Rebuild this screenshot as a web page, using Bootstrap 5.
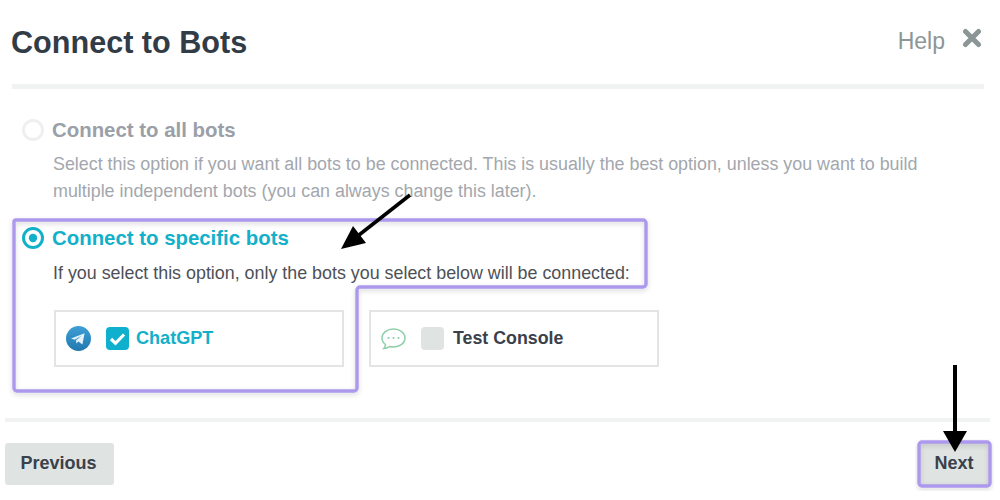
<!DOCTYPE html>
<html lang="en">
<head>
<meta charset="utf-8">
<title>Connect to Bots</title>
<link href="https://cdn.jsdelivr.net/npm/bootstrap@5.3.0/dist/css/bootstrap.min.css" rel="stylesheet">
<style>
html,body{height:500px;overflow:hidden}
body{font-family:"Liberation Sans",Arial,sans-serif;background:#fff;color:#3f4650}
.stage{position:relative;width:1000px;height:500px;display:flex;flex-direction:column;padding-top:20px}
.top-bar{padding:0 18px 0 11px;height:44px}
.page-title{font-size:30.6px;font-weight:700;color:#323c47;margin:0;line-height:44px}
.help-link{font-size:23px;color:#8c9696;line-height:40px;margin-right:17px;margin-top:-2px}
.close-x{display:block;margin-top:-8px}
.rule-top{height:5px;background:#f1f2f2;margin:20px 16px 0 12px;flex:none}
.options{padding:0 0 0 22px;height:329px}
.opt-head{display:flex;align-items:center;gap:8px;font-size:20.4px;font-weight:700;line-height:24px}
.opt-one{margin-top:29px}
.opt-one .opt-head{color:#9a9fa8}
.opt-two{margin-top:21px}
.opt-two .opt-head{color:#12b0c9}
.opt-text{font-size:17.88px;line-height:27px;margin:9px 50px 0 31px;color:#a3a7ad}
.opt-two .opt-text{color:#4d5157;margin-top:10px;margin-bottom:0;white-space:nowrap}
.bot-row{display:flex;gap:25px;margin:23px 0 0 32px}
.bot-box{width:290px;height:57px;border:2px solid #e3e5e5;display:flex;align-items:center;padding-left:10px;font-size:17.8px;font-weight:700;color:#3a414b}
.bot-box.on{color:#12b0c9;font-size:18.1px}
.tick{width:23px;height:23px;border-radius:4px;background:#dfe3e2;margin-left:15px;margin-right:9px;flex:none;display:flex;align-items:center;justify-content:center}
.tick.on{background:#0fb0cd;margin-right:7px}
.rule-low{height:4px;background:#f1f2f2;margin:0 10px 0 5px;flex:none}
.foot{padding:21px 10px 0 5px}
.btn-flat{background:#dfe3e2;color:#3a414b;border:0;border-radius:3px;font-size:18px;font-weight:700;height:42px;display:flex;align-items:center;justify-content:center;padding:0 2px 2px 0}
.btn-prev{width:109px}
.btn-next{width:70px}
.overlay{position:absolute;left:0;top:0;pointer-events:none}
</style>
</head>
<body>
<div class="stage">
  <div class="top-bar d-flex justify-content-between align-items-center">
    <h1 class="page-title">Connect to Bots</h1>
    <div class="d-flex align-items-center">
      <span class="help-link">Help</span>
      <svg class="close-x" width="20" height="20" viewBox="0 0 20 20" aria-hidden="true"><path d="M3.5 3.5 16.500 16.500M16.500 3.500 3.500 16.500" stroke="#8c9696" stroke-width="5" stroke-linecap="round"/></svg>
    </div>
  </div>
  <div class="rule-top"></div>
  <div class="options">
    <div class="opt-one">
      <div class="opt-head">
        <svg width="22" height="22" viewBox="0 0 22 22" aria-hidden="true"><circle cx="11" cy="11" r="9.500" fill="#fff" stroke="#eef0f0" stroke-width="3"/></svg>
        <span>Connect to all bots</span>
      </div>
      <p class="opt-text">Select this option if you want all bots to be connected. This is usually the best option, unless you want to build multiple independent bots (you can always change this later).</p>
    </div>
    <div class="opt-two">
      <div class="opt-head">
        <svg width="22" height="22" viewBox="0 0 22 22" aria-hidden="true"><circle cx="11" cy="11" r="9.500" fill="#fff" stroke="#12b0c9" stroke-width="3"/><circle cx="11" cy="11" r="4.200" fill="#12b0c9"/></svg>
        <span>Connect to specific bots</span>
      </div>
      <p class="opt-text">If you select this option, only the bots you select below will be connected:</p>
      <div class="bot-row">
        <div class="bot-box on">
          <svg width="25" height="25" viewBox="0 0 25 25" aria-hidden="true"><defs><linearGradient id="tg" x1="0" y1="0" x2="0" y2="1"><stop offset="0" stop-color="#3d9fd6"/><stop offset="1" stop-color="#2279ae"/></linearGradient></defs><circle cx="12.500" cy="12.500" r="12.500" fill="url(#tg)"/><path d="M5 12.600 18.600 7.200 16.400 18.400 12.400 15.600 10.400 17.600 10 14.200 15.600 9.800 8.600 13.800Z" fill="#e4f1f9"/></svg>
          <span class="tick on"><svg width="17" height="14" viewBox="0 0 17 14" aria-hidden="true"><path d="M2 7 6.500 11.300 15 2.500" fill="none" stroke="#fff" stroke-width="3.200"/></svg></span>
          <span>ChatGPT</span>
        </div>
        <div class="bot-box">
          <svg width="25" height="24" viewBox="0 0 25 24" aria-hidden="true"><path d="M12.500 2C6 2 1 6 1 11c0 2.600 1.300 4.900 3.500 6.500 0 1.600-.7 3-1.700 4 2.300 0 4.300-.8 5.700-2 1.200.3 2.700.5 4 .5 6.500 0 11.500-4 11.500-9S19 2 12.500 2Z" fill="none" stroke="#8fd0ab" stroke-width="1.500"/><circle cx="7.500" cy="11" r="1.100" fill="#8fd0ab"/><circle cx="12.500" cy="11" r="1.100" fill="#8fd0ab"/><circle cx="17.500" cy="11" r="1.100" fill="#8fd0ab"/></svg>
          <span class="tick"></span>
          <span>Test Console</span>
        </div>
      </div>
    </div>
  </div>
  <div class="rule-low"></div>
  <div class="foot d-flex justify-content-between align-items-center">
    <button type="button" class="btn btn-flat btn-prev">Previous</button>
    <button type="button" class="btn btn-flat btn-next">Next</button>
  </div>
  <svg class="overlay" width="1000" height="500" viewBox="0 0 1000 500" aria-hidden="true">
    <defs><filter id="sh" x="-5%" y="-5%" width="110%" height="115%"><feDropShadow dx="0" dy="2" stdDeviation="2.500" flood-color="#000" flood-opacity=".16"/></filter></defs>
    <path d="M16 220H643a3 3 0 0 1 3 3V284a3 3 0 0 1-3 3H360a3 3 0 0 0-3 3V388a3 3 0 0 1-3 3H17a3 3 0 0 1-3-3V222a2 2 0 0 1 2-2Z" fill="none" stroke="#ac98ec" stroke-width="3.400" filter="url(#sh)"/>
    <rect x="919" y="442" width="71" height="44" rx="3" fill="none" stroke="#ac98ec" stroke-width="3.400" filter="url(#sh)"/>
    <path d="M410 195 359 235" stroke="#000" stroke-width="3.500"/>
    <path d="M341 249 353 226 366 243Z" fill="#000"/>
    <rect x="953" y="365" width="4" height="68" fill="#000"/>
    <path d="M943 431H967L955 452Z" fill="#000"/>
  </svg>
</div>
<script src="https://cdn.jsdelivr.net/npm/bootstrap@5.3.0/dist/js/bootstrap.bundle.min.js"></script>
</body>
</html>
